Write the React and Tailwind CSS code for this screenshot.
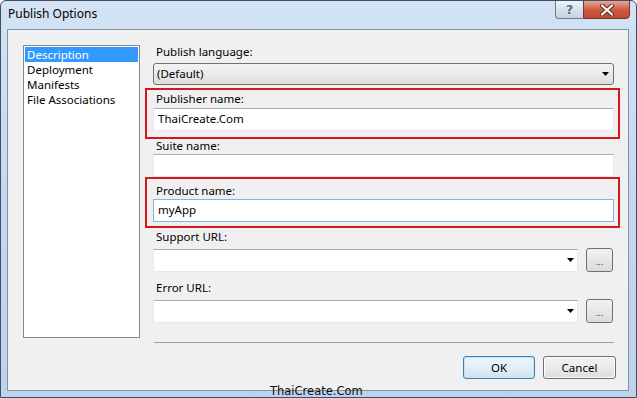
import React from "react";

const F = { fontFamily: '"Noto Sans", "Open Sans", sans-serif' };

function Arrow() {
  return (
    <svg width="7" height="4" viewBox="0 0 7 4" className="block">
      <path d="M0 0 H7 L3.5 4 Z" fill="#000" />
    </svg>
  );
}

function TextInput({ value, focused }) {
  return (
    <div
      className={
        "ml-[8px] w-[461px] h-[23px] bg-white border pl-[4px] pt-[3px] leading-[14px] " +
        (focused
          ? "border-[#7eb4ea]"
          : "border-[#e3e9ef] border-t-[#abadb3]")
      }
    >
      {value}
    </div>
  );
}

function Label({ children, className = "" }) {
  return <div className={"ml-[11px] h-[14px] leading-[14px] " + className}>{children}</div>;
}

function ComboWithButton({ className = "" }) {
  return (
    <div className={"ml-[8px] flex items-center " + className}>
      <div className="w-[425px] h-[23px] bg-white border border-[#e3e9ef] border-t-[#abadb3] flex items-center justify-end pr-[3px]">
        <Arrow />
      </div>
      <div className="ml-[8px] w-[27px] h-[24px] rounded-[3px] border border-[#707070] bg-gradient-to-b from-[#f2f2f2] to-[#dcdcdc] flex items-end justify-center pb-[5px]">
        <span className="text-[9px] leading-[8px] tracking-[0px] text-[#333]">...</span>
      </div>
    </div>
  );
}

export default function App() {
  return (
    <div
      className="relative w-[637px] h-[398px] overflow-hidden rounded-t-[6px] border border-[#3f4f63] bg-gradient-to-b from-[#d3e3f5] via-[#c4d8ef] to-[#bdd3ec] flex flex-col text-[11.5px] text-black"
      style={F}
    >
      {/* Title bar */}
      <div className="h-[28px] flex items-start shrink-0">
        <div className="pl-[7px] pt-[6px] text-[12px] leading-[14px] text-black">Publish Options</div>
        <div className="ml-auto mr-[6px] flex">
          <div className="w-[28px] h-[19px] mt-[-1px] border border-[#6b7a8d] border-r-0 rounded-bl-[4px] bg-gradient-to-b from-[#eef3f9] via-[#d7e2ef] to-[#c3d2e4] flex items-center justify-center">
            <span className="text-[13px] font-bold leading-[13px] text-[#5c6a7a]" style={{ fontFamily: '"DejaVu Sans", sans-serif', textShadow: "0 0 1px #fff" }}>?</span>
          </div>
          <div className="w-[47px] h-[19px] mt-[-1px] border border-[#6b3a32] rounded-br-[4px] bg-gradient-to-b from-[#e9a899] via-[#cc5a44] to-[#c8452f] flex items-center justify-center">
            <svg width="16" height="12" viewBox="0 0 16 12">
              <path d="M3 1.5 L13 10.5 M13 1.5 L3 10.5" stroke="#5b2a22" strokeWidth="4" strokeLinecap="round" />
              <path d="M3 1.5 L13 10.5 M13 1.5 L3 10.5" stroke="#ffffff" strokeWidth="2.2" strokeLinecap="round" />
            </svg>
          </div>
        </div>
      </div>

      {/* Body */}
      <div className="flex-1 flex pl-[6px] pr-[7px] pb-[6px]">
        <div className="flex-1 border border-[#8394a8] bg-[#f0f0f0] flex flex-col pt-[15px] pl-[15px]">
          <div className="flex items-start">
            {/* List */}
            <div className="w-[117px] h-[293px] bg-white border border-[#828790] p-[1px] flex flex-col">
              <div className="h-[15px] leading-[15px] bg-[#3399ff] text-white pl-[2px]">Description</div>
              <div className="h-[15px] leading-[15px] pl-[2px]">Deployment</div>
              <div className="h-[15px] leading-[15px] pl-[2px]">Manifests</div>
              <div className="h-[15px] leading-[15px] pl-[2px]">File Associations</div>
            </div>

            {/* Right column */}
            <div className="ml-[5px] w-[475px] flex flex-col">
              <Label>Publish language:</Label>
              <div className="mt-[4px] ml-[8px] w-[461px] h-[22px] rounded-[3px] border border-[#707070] bg-gradient-to-b from-[#f3f3f3] via-[#ebebeb] to-[#dcdcdc] flex items-start justify-between pl-[3px] pr-[4px] pt-[1px] leading-[14px]">
                <span className="pt-[2px]">(Default)</span>
                <span className="pt-[7px]"><Arrow /></span>
              </div>

              <div className="mt-[3px] border-2 border-[#d4171b] w-[475px] pb-[6px]">
                <div className="pt-[2px]">
                  <div className="ml-[9px] h-[14px] leading-[14px]">Publisher name:</div>
                </div>
                <div className="mt-[2px] ml-[6px] w-[461px] h-[23px] bg-white border border-[#e3e9ef] border-t-[#abadb3] pl-[4px] pt-[3px] leading-[14px]">
                  ThaiCreate.Com
                </div>
              </div>

              <Label className="mt-[0px]">Suite name:</Label>
              <div className="mt-[1px]">
                <TextInput value="" />
              </div>

              <div className="border-2 border-[#d4171b] w-[475px] pb-[4px]">
                <div className="pt-[5px]">
                  <div className="ml-[9px] h-[14px] leading-[14px]">Product name:</div>
                </div>
                <div className="mt-[1px] ml-[6px] w-[461px] h-[23px] bg-white border border-[#7eb4ea] pl-[4px] pt-[3px] leading-[14px]">
                  myApp
                </div>
              </div>

              <Label className="mt-[2px]">Support URL:</Label>
              <ComboWithButton className="mt-[4px]" />

              <Label className="mt-[9px]">Error URL:</Label>
              <ComboWithButton className="mt-[4px]" />

              <div className="mt-[19px] ml-[9px] w-[460px] h-px bg-[#a0a0a0]" />
            </div>
          </div>

          {/* Buttons */}
          <div className="mt-[13px] flex pl-[440px]">
            <div className="w-[72px] h-[23px] rounded-[3px] border border-[#3c7fb1] bg-gradient-to-b from-[#eaf6fd] via-[#e3eef6] to-[#cfe3f0] flex items-center justify-center leading-[14px] shadow-[inset_0_0_0_1px_#bfe3f8]">
              OK
            </div>
            <div className="ml-[8px] w-[73px] h-[23px] rounded-[3px] border border-[#707070] bg-gradient-to-b from-[#f2f2f2] via-[#ebebeb] to-[#dcdcdc] flex items-center justify-center leading-[14px] shadow-[inset_0_0_0_1px_#fcfcfc]">
              Cancel
            </div>
          </div>
        </div>
      </div>

      {/* Watermark */}
      <div
        className="absolute left-[269px] top-[383px] text-[11.5px] leading-[14px] text-[#111]"
        style={{ fontFamily: '"DejaVu Sans", Verdana, sans-serif' }}
      >
        ThaiCreate.Com
      </div>
    </div>
  );
}
